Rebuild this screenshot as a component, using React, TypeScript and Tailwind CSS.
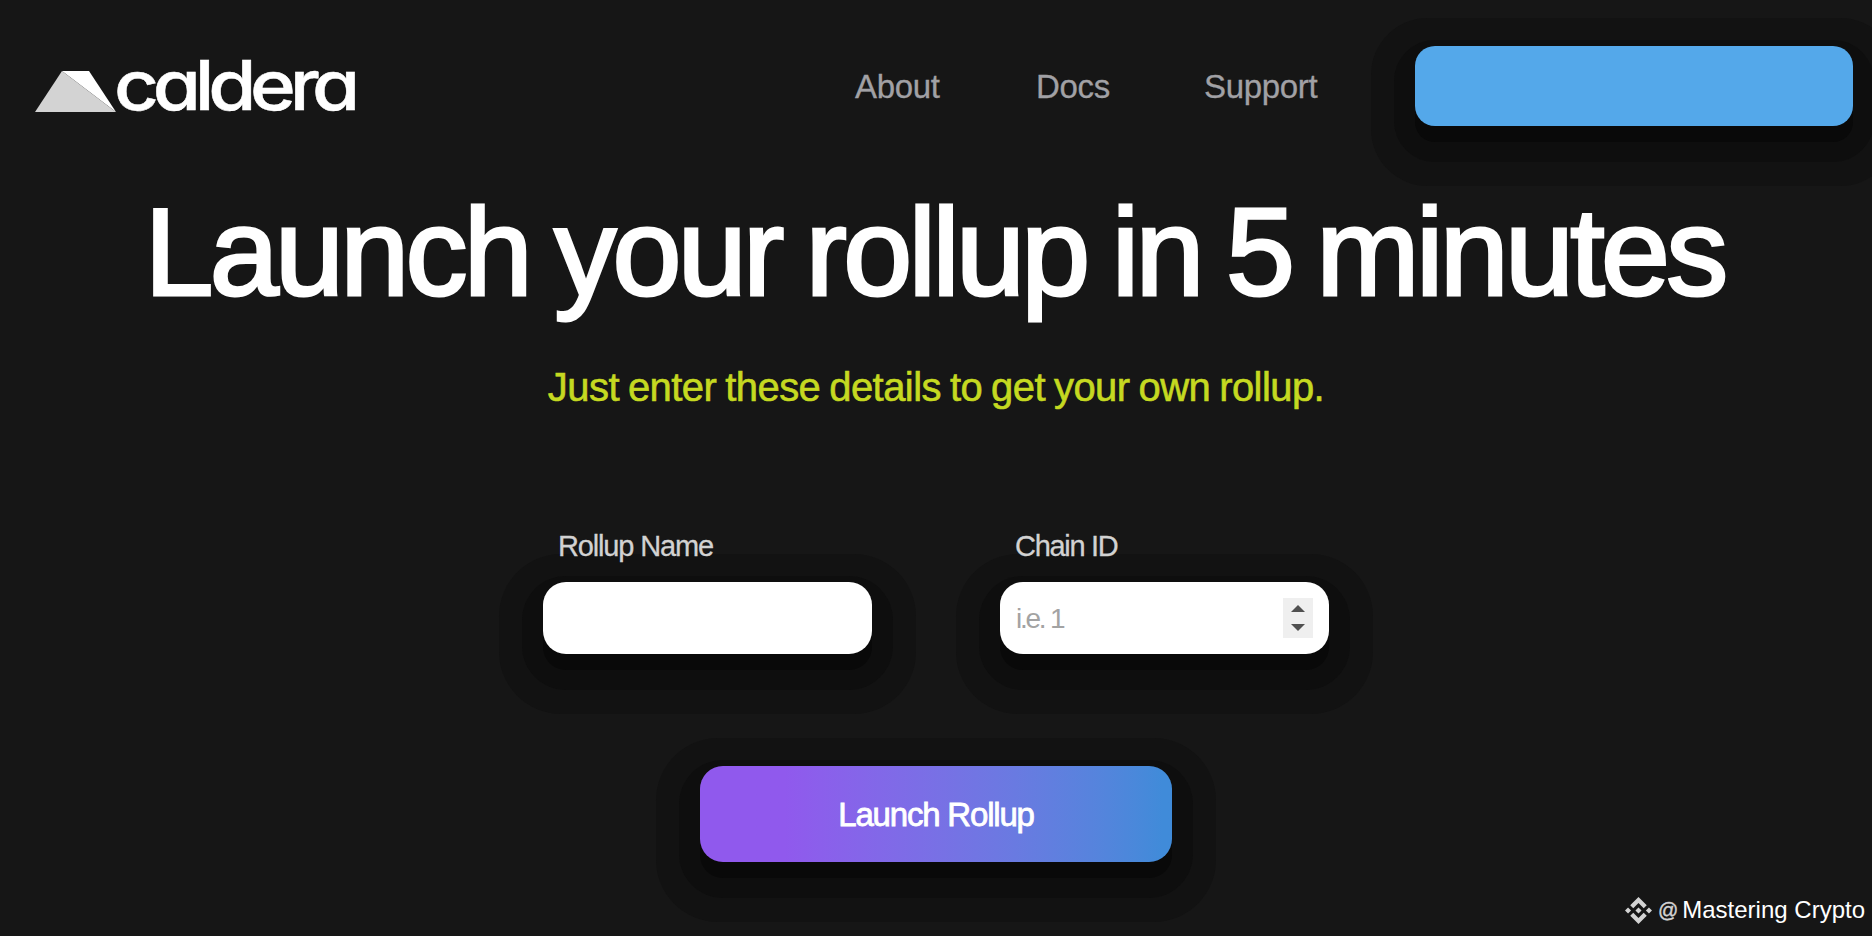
import { useState } from "react";
import { SiBinance } from "react-icons/si";

const bandShadow =
  "shadow-[0_16px_0_0_#090909,0_15px_0_21px_#0e0e0e,0_16px_0_44px_#121212]";

const navLinks = [
  { label: "About", width: "w-[85px]" },
  { label: "Docs", width: "w-[72px]" },
  { label: "Support", width: "w-[115px]" },
];

function Logo() {
  return (
    <a href="#" className="flex items-end" aria-label="caldera">
      <svg width="81" height="41" viewBox="0 0 81 41" className="shrink-0">
        <path d="M27 0H54L81 41Z" fill="#ffffff" />
        <path d="M27 0L81 41H0Z" fill="#d3d3d3" />
      </svg>
      <span className="flex h-[41px] items-end">
        <span className="-ml-[2px] origin-left scale-x-[1.13] font-['Inter',sans-serif] text-[69px] leading-[54px] font-medium tracking-[-0.08em] whitespace-nowrap text-white [-webkit-text-stroke:0.5px_#ffffff] [font-feature-settings:'cv11']">
          caldera
        </span>
      </span>
    </a>
  );
}

function Header() {
  return (
    <header className="flex h-[172px] items-start justify-between pr-[19px] pl-[35px]">
      <div className="pt-[71px]">
        <Logo />
      </div>
      <nav className="flex items-start gap-24 pt-[46px]">
        {navLinks.map((link) => (
          <a
            key={link.label}
            href="#"
            className={`${link.width} pt-[21px] text-[33px] leading-[40px] tracking-[-0.01em] whitespace-nowrap text-[#a1a1a5] [-webkit-text-stroke:0.3px_#a1a1a5]`}
          >
            {link.label}
          </a>
        ))}
        <button
          type="button"
          aria-label="Account"
          className={`h-20 w-[438px] rounded-[20px] bg-[#54a8ea] ${bandShadow}`}
        />
      </nav>
    </header>
  );
}

function Stepper({ onStep }: { onStep: (delta: number) => void }) {
  return (
    <div className="flex h-10 w-[30px] shrink-0 flex-col items-center justify-center gap-3 bg-[#efefef]">
      <button type="button" aria-label="Increase" onClick={() => onStep(1)}>
        <svg width="14" height="7" viewBox="0 0 14 7" className="block">
          <path d="M7 0L14 7H0Z" fill="#505050" />
        </svg>
      </button>
      <button type="button" aria-label="Decrease" onClick={() => onStep(-1)}>
        <svg width="14" height="7" viewBox="0 0 14 7" className="block">
          <path d="M0 0H14L7 7Z" fill="#505050" />
        </svg>
      </button>
    </div>
  );
}

export default function App() {
  const [name, setName] = useState("");
  const [chainId, setChainId] = useState("");

  const stepChainId = (delta: number) => {
    setChainId((id) => String(Math.max(1, (Number(id) || 0) + delta)));
  };

  return (
    <div className="relative h-[936px] w-[1872px] overflow-hidden bg-[#161616] font-['Liberation_Sans',sans-serif]">
      <Header />

      <main className="flex flex-col items-center">
        <h1 className="pt-[5px] pr-[3px] text-[124px] leading-[150px] tracking-[-0.03em] [word-spacing:-0.045em] whitespace-nowrap text-white [-webkit-text-stroke:3px_#ffffff]">
          Launch your rollup in 5 minutes
        </h1>
        <p className="pt-[35px] text-[40px] leading-[50px] tracking-[-0.014em] [word-spacing:-0.04em] whitespace-nowrap text-[#c5d921] [-webkit-text-stroke:0.6px_#c5d921]">
          Just enter these details to get your own rollup.
        </p>

        <form className="flex flex-col items-center pt-[114px]" onSubmit={(e) => e.preventDefault()}>
          <div className="flex gap-32">
            {/* Rollup name */}
            <div className="w-[329px]">
              <label
                htmlFor="name"
                className="relative z-10 block h-[56px] pl-[15px] text-[29px] leading-[40px] tracking-[-0.04em] text-[#d2d2d2] [-webkit-text-stroke:0.3px_#d2d2d2]"
              >
                Rollup Name
              </label>
              <div className={`flex h-[72px] items-center rounded-[23px] bg-white px-4 ${bandShadow}`}>
                <input
                  id="name"
                  value={name}
                  onChange={(e) => setName(e.target.value)}
                  className="w-full text-[28px] tracking-[-0.045em] text-black outline-none"
                />
              </div>
            </div>

            {/* Chain ID */}
            <div className="w-[329px]">
              <label
                htmlFor="chain"
                className="relative z-10 block h-[56px] pl-[15px] text-[29px] leading-[40px] tracking-[-0.045em] text-[#d2d2d2] [-webkit-text-stroke:0.3px_#d2d2d2]"
              >
                Chain ID
              </label>
              <div className={`flex h-[72px] items-center rounded-[23px] bg-white px-4 ${bandShadow}`}>
                <input
                  id="chain"
                  value={chainId}
                  placeholder="i.e. 1"
                  onChange={(e) => setChainId(e.target.value)}
                  className="w-full min-w-0 pt-[2px] text-[28px] tracking-[-0.08em] text-black outline-none placeholder:text-[#a3a3a3]"
                />
                <Stepper onStep={stepChainId} />
              </div>
            </div>
          </div>

          <button
            type="submit"
            className={`mt-28 h-24 w-[472px] rounded-[23px] bg-linear-to-r from-[#9059ed] from-18% to-[#408bd9] to-98% pt-px text-[33px] tracking-[-0.036em] text-white [-webkit-text-stroke:0.8px_#ffffff] ${bandShadow}`}
          >
            Launch Rollup
          </button>
        </form>
      </main>

      {/* Watermark */}
      <div className="absolute right-[7px] bottom-3 flex items-center text-[24px] leading-[28px] whitespace-nowrap text-white">
        <SiBinance className="mr-[6px] size-[27px] text-[#d3d3d3]" />
        <span className="mr-1 text-[20px] text-[#d3d3d3] [-webkit-text-stroke:0.4px_#d3d3d3]">@</span>
        <span>Mastering Crypto</span>
      </div>
    </div>
  );
}
